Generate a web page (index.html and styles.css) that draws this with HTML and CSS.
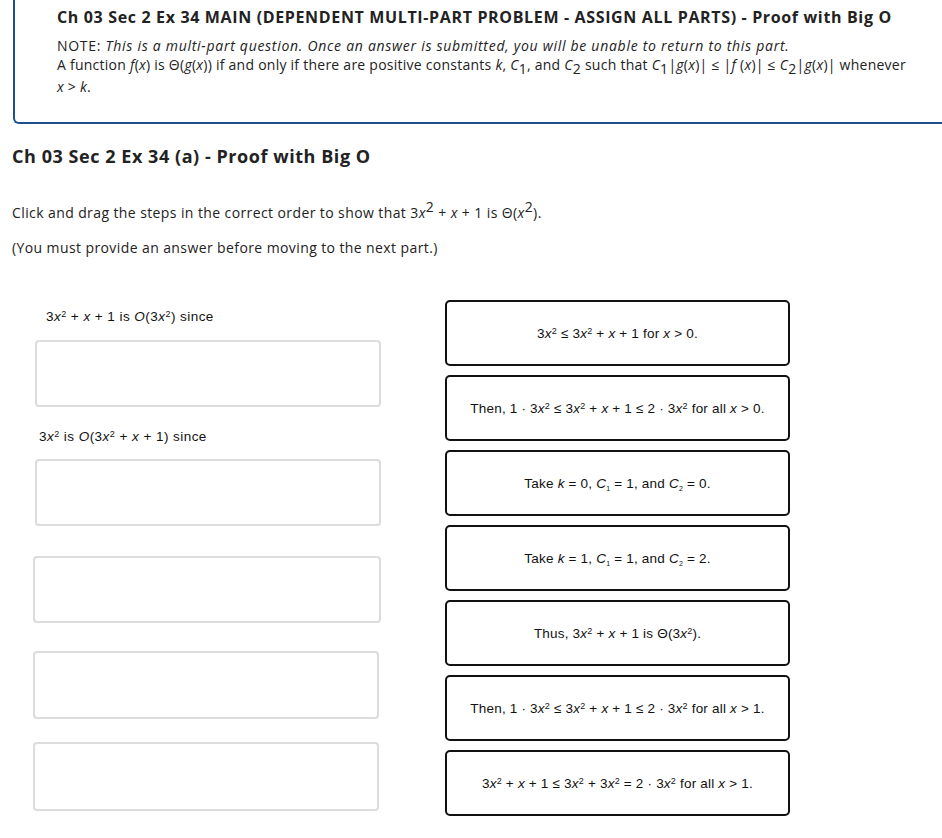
FILE: index.html
```html
<!DOCTYPE html>
<html>
<head>
<meta charset="utf-8">
<link rel="stylesheet" href="styles.css">
</head>
<body>
<div class="problem">
  <h1 class="title">Ch 03 Sec 2 Ex 34 MAIN (DEPENDENT MULTI-PART PROBLEM - ASSIGN ALL PARTS) - Proof with Big O</h1>
  <p class="note">NOTE: <em>This is a multi-part question. Once an answer is submitted, you will be unable to return to this part.</em></p>
  <p class="def">A function <em>f</em>(<em>x</em>) is Θ(<em>g</em>(<em>x</em>)) if and only if there are positive constants <em>k</em>, <em>C</em><sub>1</sub>, and <em>C</em><sub>2</sub> such that <em>C</em><sub>1</sub>|<em>g</em>(<em>x</em>)| ≤ |<em>f</em> (<em>x</em>)| ≤ <em>C</em><sub>2</sub>|<em>g</em>(<em>x</em>)| whenever <span class="nowrap"><em>x</em> &gt; <em>k</em>.</span></p>
</div>

<section class="part">
  <h2 class="part-title">Ch 03 Sec 2 Ex 34 (a) - Proof with Big O</h2>
  <p class="prompt">Click and drag the steps in the correct order to show that 3<em>x</em><sup>2</sup> + <em>x</em> + 1 is Θ(<em>x</em><sup>2</sup>).</p>
  <p class="prompt second">(You must provide an answer before moving to the next part.)</p>

  <div class="dnd">
    <div class="targets">
      <div class="label first">3<em>x</em><sup>2</sup> + <em>x</em> + 1 is <em>O</em>(3<em>x</em><sup>2</sup>) since</div>
      <div class="drop d1"></div>
      <div class="label">3<em>x</em><sup>2</sup> is <em>O</em>(3<em>x</em><sup>2</sup> + <em>x</em> + 1) since</div>
      <div class="drop d2"></div>
      <div class="drop d3"></div>
      <div class="drop d4"></div>
      <div class="drop d5"></div>
    </div>
    <div class="sources">
      <div class="card"><span class="step">3<em>x</em><sup>2</sup> ≤ 3<em>x</em><sup>2</sup> + <em>x</em> + 1 for <em>x</em> &gt; 0.</span></div>
      <div class="card"><span class="step">Then, 1 · 3<em>x</em><sup>2</sup> ≤ 3<em>x</em><sup>2</sup> + <em>x</em> + 1 ≤ 2 · 3<em>x</em><sup>2</sup> for all <em>x</em> &gt; 0.</span></div>
      <div class="card"><span class="step">Take <em>k</em> = 0, <em>C</em><sub>1</sub> = 1, and <em>C</em><sub>2</sub> = 0.</span></div>
      <div class="card"><span class="step">Take <em>k</em> = 1, <em>C</em><sub>1</sub> = 1, and <em>C</em><sub>2</sub> = 2.</span></div>
      <div class="card"><span class="step">Thus, 3<em>x</em><sup>2</sup> + <em>x</em> + 1 is Θ(3<em>x</em><sup>2</sup>).</span></div>
      <div class="card"><span class="step">Then, 1 · 3<em>x</em><sup>2</sup> ≤ 3<em>x</em><sup>2</sup> + <em>x</em> + 1 ≤ 2 · 3<em>x</em><sup>2</sup> for all <em>x</em> &gt; 1.</span></div>
      <div class="card"><span class="step">3<em>x</em><sup>2</sup> + <em>x</em> + 1 ≤ 3<em>x</em><sup>2</sup> + 3<em>x</em><sup>2</sup> = 2 · 3<em>x</em><sup>2</sup> for all <em>x</em> &gt; 1.</span></div>
    </div>
  </div>
</section>
</body>
</html>
```

FILE: styles.css
```css
html, body {
  margin: 0;
  padding: 0;
  background: #ffffff;
}

body {
  font-family: "Open Sans", Lato, sans-serif;
  color: #222222;
  width: 942px;
  overflow: hidden;
}

.problem {
  margin-left: 13px;
  margin-right: -20px;
  border-left: 2px solid #1f4f8a;
  border-bottom: 2px solid #1f4f8a;
  border-bottom-left-radius: 6px;
  padding: 7px 0 24px 42px;
}

.title {
  margin: 0;
  font-size: 16px;
  line-height: 20px;
  font-weight: 700;
  letter-spacing: 0.65px;
  color: #222;
}

.note {
  margin: 9px 0 0 0;
  font-size: 14px;
  line-height: 19px;
  letter-spacing: 0.72px;
}

.def {
  margin: -1px 0 0 0;
  font-size: 14px;
  line-height: 22px;
  letter-spacing: 0.25px;
  max-width: 860px;
}

.nowrap {
  white-space: nowrap;
}

.def sub {
  font-size: 14px;
  line-height: 0;
  vertical-align: -4px;
}

.part {
  padding-left: 12px;
}

.part-title {
  margin: 21px 0 0 0;
  font-size: 18px;
  line-height: 22px;
  font-weight: 700;
  letter-spacing: 0.55px;
  color: #222;
}

.prompt {
  margin: 36px 0 0 0;
  font-size: 14px;
  line-height: 20px;
  letter-spacing: 0.4px;
}

.prompt sup {
  font-size: 14px;
  line-height: 0;
  vertical-align: 6px;
}

.prompt.second {
  margin-top: 15px;
}

.dnd {
  display: flex;
  gap: 64px;
  margin-top: 42px;
  padding-left: 23px;
  font-family: "Liberation Sans", Arial, sans-serif;
  font-size: 13.5px;
  color: #111;
}

.targets {
  width: 346px;
  display: flex;
  flex-direction: column;
}

.label {
  line-height: 16px;
  padding-left: 4px;
  letter-spacing: 0.45px;
}

.label.first {
  margin-top: 9px;
  padding-left: 11px;
}

.drop {
  height: 63px;
  border: 2px solid #dcdcdc;
  border-radius: 4px;
  box-sizing: content-box;
  margin-top: 16px;
}

.drop.d1 {
  margin-top: 15px;
  margin-bottom: 22px;
}

.drop.d2 {
  margin-top: 14px;
}

.drop.d3 {
  margin-top: 30px;
  margin-left: -2px;
}

.drop.d4 {
  margin-top: 28px;
  margin-left: -2px;
  margin-right: 2px;
  height: 64px;
}

.drop.d5 {
  margin-top: 23px;
  margin-left: -2px;
  margin-right: 2px;
  height: 65px;
}

.sources {
  width: 345px;
  display: flex;
  flex-direction: column;
  gap: 9px;
}

.card {
  height: 62px;
  border: 2px solid #111;
  border-radius: 5px;
  display: flex;
  align-items: center;
  justify-content: center;
  text-align: center;
}

.step {
  display: block;
  letter-spacing: 0.2px;
}

em {
  font-style: italic;
}

.dnd sup {
  font-size: 9px;
  line-height: 0;
  vertical-align: 4px;
}

.dnd sub {
  font-size: 7px;
  line-height: 0;
  vertical-align: -3px;
}
```
